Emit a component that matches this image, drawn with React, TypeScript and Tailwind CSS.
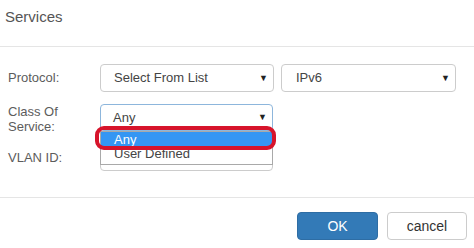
import React from "react";

function Arrow() {
  return <span className="text-[9px] leading-none text-[#222]">▼</span>;
}

export default function App() {
  return (
    <div className="relative w-[474px] h-[248px] overflow-hidden bg-white font-['Liberation_Sans',Arial,sans-serif] text-[13px] text-[#5c5c5c]">
      <div className="h-[47px] border-b border-[#e5e5e5] pl-[5px] pt-[6px] text-[15px] text-[#555]">
        Services
      </div>
      <div className="pt-[17px] pl-[8px]">
        <div className="flex h-[28px] items-center">
          <div className="w-[92px]">Protocol:</div>
          <div className="flex h-[28px] w-[174px] items-center justify-between rounded-[4px] border border-[#ccc] pl-[13px] pr-[5px] text-[#444]">
            <span>Select From List</span>
            <Arrow />
          </div>
          <div className="ml-[7px] flex h-[28px] w-[175px] items-center justify-between rounded-[4px] border border-[#ccc] pl-[14px] pr-[5px] text-[#444]">
            <span>IPv6</span>
            <Arrow />
          </div>
        </div>
        <div className="mt-[12px] flex h-[27px] items-center">
          <div className="w-[92px] leading-[15px] pt-[2px]">
            Class Of
            <br />
            Service:
          </div>
          <div className="flex h-[27px] w-[173px] items-center justify-between rounded-[4px] border border-[#8db6dc] pl-[12px] pr-[5px] text-[#444]">
            <span>Any</span>
            <Arrow />
          </div>
        </div>
        <div className="mt-[12px] flex h-[28px] items-center">
          <div className="w-[92px] pt-[2px]">VLAN ID:</div>
          <div className="h-[28px] w-[173px] rounded-[4px] border border-[#ccc]" />
        </div>
      </div>
      <div className="mt-[26px] flex justify-end gap-[9px] border-t border-[#e5e5e5] pr-[7px] pt-[14px]">
        <button className="h-[28px] w-[81px] rounded-[4px] border border-[#2e6da4] bg-[#337ab7] text-[14px] text-white">
          OK
        </button>
        <button className="h-[28px] w-[80px] rounded-[4px] border border-[#ccc] bg-white text-[14px] text-[#333]">
          cancel
        </button>
      </div>

      <div className="absolute left-[100px] top-[131px] h-[34px] w-[173px] border border-[#a9a9a9] bg-white">
        <div className="flex h-[14px] items-center bg-[#3596f3] pl-[13px] leading-none text-white">
          Any
        </div>
        <div className="flex h-[15px] items-center pl-[13px] leading-none text-[#444]">
          User Defined
        </div>
      </div>
      <div className="absolute left-[95px] top-[126px] h-[24px] w-[181px] rounded-[9px] border-[4px] border-[#d7142b]" />
    </div>
  );
}
